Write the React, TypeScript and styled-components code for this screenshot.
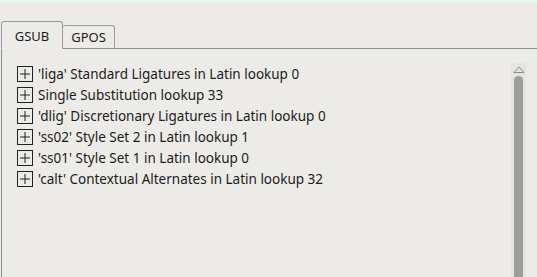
import React from "react";
import styled, { createGlobalStyle } from "styled-components";

const Global = createGlobalStyle`
  html, body { margin: 0; padding: 0; background: #edebe8; overflow: hidden; }
  body { font-family: "Noto Sans", "Open Sans", sans-serif; }
`;

const Page = styled.div`
  width: 537px;
  height: 277px;
  display: flex;
  flex-direction: column;
  background: #edebe8;
`;

const TopBand = styled.div`
  height: 3px;
  background: #e8f6ef;
`;

const TabBar = styled.div`
  display: flex;
  align-items: flex-end;
  padding: 18px 0 0 1px;
  position: relative;
  z-index: 1;
`;

const Tab = styled.div<{ $active?: boolean }>`
  box-sizing: border-box;
  height: ${(p) => (p.$active ? 28 : 23)}px;
  width: ${(p) => (p.$active ? 62 : 52)}px;
  border: 1px solid #9a9a98;
  border-bottom: ${(p) => (p.$active ? "1px solid #edebe8" : "none")};
  border-left: ${(p) => (p.$active ? "1px solid #9a9a98" : "none")};
  border-radius: 3px 3px 0 0;
  background: #edebe8;
  font-size: 13px;
  color: #1b1b1b;
  display: flex;
  align-items: center;
  justify-content: center;
  padding-top: ${(p) => (p.$active ? 2 : 0)}px;
  margin-bottom: ${(p) => (p.$active ? -1 : 0)}px;
`;

const Pane = styled.div`
  flex: 1;
  margin-left: 1px;
  border-left: 1px solid #8e8e8c;
  border-top: 1px solid #8e8e8c;
  display: flex;
  min-height: 0;
`;

const List = styled.div`
  flex: 1;
  display: flex;
  flex-direction: column;
  padding: 14px 0 0 14px;
`;

const Row = styled.div`
  display: flex;
  align-items: center;
  height: 21px;
  gap: 4px;
  font-size: 13.5px;
  color: #1b1b1b;
  white-space: nowrap;
`;

const PlusBox = styled.svg`
  flex: none;
  width: 18px;
  height: 18px;
`;

const ScrollTrack = styled.div`
  width: 15px;
  margin: 14px 11px 0 0;
  background: #e6e4e1;
  display: flex;
  flex-direction: column;
  align-items: center;
`;

const Arrow = styled.svg`
  width: 14px;
  height: 10px;
  margin-top: 1px;
`;

const Thumb = styled.div`
  width: 9px;
  flex: 1;
  margin-top: 2px;
  background: #9c9c98;
  border-radius: 5px 5px 0 0;
`;

const items = [
  "'liga' Standard Ligatures in Latin lookup 0",
  "Single Substitution lookup 33",
  "'dlig' Discretionary Ligatures in Latin lookup 0",
  "'ss02' Style Set 2 in Latin lookup 1",
  "'ss01' Style Set 1 in Latin lookup 0",
  "'calt' Contextual Alternates in Latin lookup 32",
];

export default function App() {
  return (
    <Page>
      <Global />
      <TopBand />
      <TabBar>
        <Tab $active>GSUB</Tab>
        <Tab>GPOS</Tab>
      </TabBar>
      <Pane>
        <List>
          {items.map((t) => (
            <Row key={t}>
              <PlusBox viewBox="0 0 18 18">
                <rect x="1.5" y="1.5" width="15" height="15" fill="none" stroke="#222" strokeWidth="1" />
                <path d="M9 4v10M4 9h10" stroke="#222" strokeWidth="1" />
              </PlusBox>
              {t}
            </Row>
          ))}
        </List>
        <ScrollTrack>
          <Arrow viewBox="0 0 14 10">
            <path d="M2 8.5L7 3l5 5.5z" fill="none" stroke="#8a8a88" strokeWidth="1" />
          </Arrow>
          <Thumb />
        </ScrollTrack>
      </Pane>
    </Page>
  );
}
